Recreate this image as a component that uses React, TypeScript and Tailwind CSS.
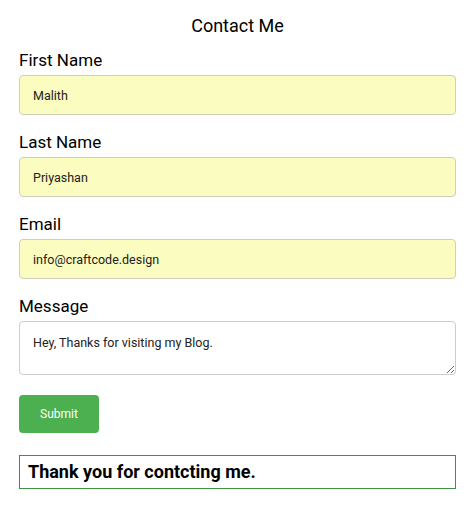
import { useState } from 'react';

const fields = [
  { id: 'firstName', label: 'First Name', value: 'Malith' },
  { id: 'lastName', label: 'Last Name', value: 'Priyashan' },
  { id: 'email', label: 'Email', value: 'info@craftcode.design' },
];

export default function App() {
  const [message, setMessage] = useState('Hey, Thanks for visiting my Blog.');

  return (
    <div className="min-h-screen bg-white pl-[19px] pr-[18px] pt-[14px] text-black font-['Roboto','Liberation_Sans',sans-serif]">
      <h1 className="text-center text-[18px] leading-[24px] font-normal">Contact Me</h1>

      <form className="mt-[11px]" onSubmit={(e) => e.preventDefault()}>
        {fields.map((f, i) => (
          <div key={f.id} className={i === 0 ? '' : 'mt-[16px]'}>
            <label htmlFor={f.id} className="block text-[17px] leading-[22px] mb-[4px]">
              {f.label}
            </label>
            <input
              id={f.id}
              readOnly
              value={f.value}
              className="block w-full h-[40px] rounded-[4px] border border-[#cfcfc0] bg-[#fafcc0] px-[13px] text-[12.5px] text-[#222] outline-none"
            />
          </div>
        ))}

        <div className="mt-[16px]">
          <label htmlFor="message" className="block text-[17px] leading-[22px] mb-[4px]">
            Message
          </label>
          <textarea
            id="message"
            value={message}
            onChange={(e) => setMessage(e.target.value)}
            className="block w-full h-[54px] rounded-[4px] border border-[#cccccc] bg-white px-[13px] pt-[13px] text-[12.5px] leading-[16px] text-[#222] outline-none"
          />
        </div>

        <button
          type="submit"
          className="mt-[20px] block w-[80px] h-[38px] rounded-[4px] bg-[#4caf50] text-white text-[12px]"
        >
          Submit
        </button>
      </form>

      <div className="mt-[22px] h-[34px] border-[1.5px] border-[#3d9140] px-[8px] flex items-center">
        <p className="text-[18px] font-bold leading-none">Thank you for contcting me.</p>
      </div>
    </div>
  );
}
